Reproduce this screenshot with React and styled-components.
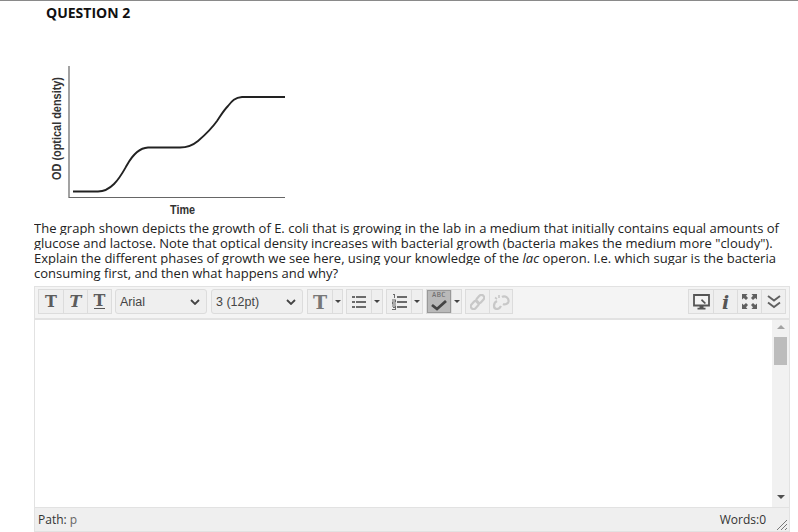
import React from "react";
import styled, { createGlobalStyle } from "styled-components";

const GlobalStyle = createGlobalStyle`
  html, body {
    margin: 0;
    padding: 0;
    background: #fff;
    overflow: hidden;
  }
  * {
    box-sizing: border-box;
  }
`;

const questionLines = [
  ["The graph shown depicts the growth of E. coli that is growing in the lab in a medium that initially contains equal amounts of"],
  ['glucose and lactose. Note that optical density increases with bacterial growth (bacteria makes the medium more "cloudy").'],
  ["Explain the different phases of growth we see here, using your knowledge of the ", <i key="lac">lac</i>, " operon. I.e. which sugar is the bacteria"],
  ["consuming first, and then what happens and why?"],
];

const GrowthChart = () => (
  <ChartSvg viewBox="0 0 260 170" width="260" height="170">
    <path d="M39 16V147.5H255" fill="none" stroke="#666" strokeWidth="1.2" />
    <path
      d="M43 141.5H68C75 141.5 80 138 84 134C90 128 93 122 97 115C102 106 108 98 118 97.5H148C156 98 162 96 168 91C175 85 182 78 187 71C191 65 194 60 198 56C202 51 205 47.5 212 47H255"
      fill="none"
      stroke="#222"
      strokeWidth="1.9"
    />
    <AxisLabel x="0" y="0" textLength="103" lengthAdjust="spacingAndGlyphs" transform="translate(30.5 130) rotate(-90)">
      OD (optical density)
    </AxisLabel>
    <AxisLabel x="140" y="164" textLength="25" lengthAdjust="spacingAndGlyphs">
      Time
    </AxisLabel>
  </ChartSvg>
);

const ListIcon = () => (
  <svg width="14" height="14" viewBox="0 0 14 14" fill="#6b6b6b">
    <path d="M0 1h3v2H0zM0 6h3v2H0zM0 11h3v2H0z" />
    <path d="M4 1h10v2H4zM4 6h10v2H4zM4 11h10v2H4z" />
  </svg>
);

const NumberedIcon = () => (
  <svg width="15" height="16" viewBox="0 0 15 16" fill="#6b6b6b">
    <path d="M1 0h2v4H2V1H1zM0 5.500h4v3H1v1h3v1H0v-3h3v-1H0zM0 11.500h4v4.500H0v-1h3v-1H1v-1h2v-.5H0z" />
    <path d="M5 2h10v2H5zM5 7h10v2H5zM5 12h10v2H5z" />
  </svg>
);

const SpellIcon = () => (
  <SpellGlyph>
    <small>ABC</small>
    <svg width="16" height="11" viewBox="0 0 16 11">
      <path d="M1 5l5 4 9-8" fill="none" stroke="#444" strokeWidth="2.8" />
    </svg>
  </SpellGlyph>
);

const LinkIcon = () => (
  <svg width="15" height="16" viewBox="0 0 15 16" fill="none" stroke="#c8c8c8" strokeWidth="2.2">
    <rect x="7.500" y="0.500" width="5.500" height="9" rx="2.700" transform="rotate(42 10.200 5)" />
    <rect x="2" y="6.500" width="5.500" height="9" rx="2.700" transform="rotate(42 4.700 11)" />
  </svg>
);

const UnlinkIcon = () => (
  <svg width="18" height="16" viewBox="0 0 18 16" fill="none" stroke="#c8c8c8" strokeWidth="2.200">
    <path d="M5 7C1 9 1 15 5 15C7 15 8 14 9 12" />
    <path d="M10 3C13 1 17 4 16.500 7.500C16 10 13 11 11 10" />
    <path d="M7 1v3M3 3.500l2 1.500" strokeWidth="1.600" />
  </svg>
);

const MonitorIcon = () => (
  <svg width="17" height="16" viewBox="0 0 17 16">
    <path d="M1 1h15v10.500H1z" fill="#f4f4f4" stroke="#555" strokeWidth="1.800" />
    <path d="M9 5l4 4-1.300 1L8 6.500z" fill="#555" />
    <path d="M6.500 12h4v1.800h2V15.500h-8v-1.700h2z" fill="#555" />
  </svg>
);

const ExpandIcon = () => (
  <svg width="15" height="15" viewBox="0 0 15 15" fill="#606060">
    <path d="M0 0h5.500L4 1.800 6 4 4 6 1.800 4 0 5.500zM15 0v5.500L13.200 4 11 6 9 4l2-2.200L9.500 0zM0 15V9.500L1.800 11 4 9l2 2-2 2.200L5.500 15zM15 15H9.500L11 13.200 9 11l2-2 2.200 2L15 9.500z" />
  </svg>
);

const CollapseIcon = () => (
  <svg width="16" height="16" viewBox="0 0 16 16" fill="none" stroke="#606060" strokeWidth="1.900">
    <path d="M2 2l6 4.500L14 2M2 8.500L8 13l6-4.500" />
  </svg>
);

const Chevron = () => (
  <svg width="10" height="6" viewBox="0 0 10 6" fill="none" stroke="#444" strokeWidth="1.800">
    <path d="M1 1l4 4 4-4" />
  </svg>
);

const App = () => (
  <>
    <GlobalStyle />
    <Page>
      <Title>QUESTION 2</Title>
      <Figure>
        <GrowthChart />
      </Figure>
      <Question>
        {questionLines.map((line, index) => (
          <QuestionLine key={index} $last={index === questionLines.length - 1}>
            {line}
          </QuestionLine>
        ))}
      </Question>
      <Editor>
        <Toolbar>
          <ToolGroup>
            <ToolButton><SerifGlyph>T</SerifGlyph></ToolButton>
            <ToolButton><SerifGlyph $italic>T</SerifGlyph></ToolButton>
            <ToolButton><SerifGlyph $underline>T</SerifGlyph></ToolButton>
          </ToolGroup>
          <SelectBox>Arial<Chevron /></SelectBox>
          <SelectBox>3 (12pt)<Chevron /></SelectBox>
          <ToolGroup>
            <ToolButton><SerifGlyph $large>T</SerifGlyph></ToolButton>
            <Caret $narrow />
          </ToolGroup>
          <ToolGroup>
            <ToolButton><ListIcon /></ToolButton>
            <Caret />
          </ToolGroup>
          <ToolGroup>
            <ToolButton><NumberedIcon /></ToolButton>
            <Caret />
          </ToolGroup>
          <ToolGroup>
            <ToolButton $active><SpellIcon /></ToolButton>
            <Caret $narrow />
          </ToolGroup>
          <ToolGroup>
            <ToolButton $compact><LinkIcon /></ToolButton>
            <ToolButton $compact><UnlinkIcon /></ToolButton>
          </ToolGroup>
          <ToolbarSpacer />
          <ToolGroup>
            <ToolButton><MonitorIcon /></ToolButton>
            <ToolButton><InfoGlyph>i</InfoGlyph></ToolButton>
            <ToolButton><ExpandIcon /></ToolButton>
            <ToolButton><CollapseIcon /></ToolButton>
          </ToolGroup>
        </Toolbar>
        <EditorBody>
          <WriteArea />
          <ScrollTrack>
            <ScrollArrow />
            <ScrollThumb />
            <ScrollArrow $down />
          </ScrollTrack>
        </EditorBody>
        <StatusBar>
          <span>Path: <PathValue>p</PathValue></span>
          <Words>Words:0</Words>
          <ResizeHandle width="11" height="11" viewBox="0 0 11 11" stroke="#777" strokeWidth="1">
            <path d="M1 11L11 1M5 11l6-6M9 11l2-2" />
          </ResizeHandle>
        </StatusBar>
      </Editor>
    </Page>
  </>
);

const Page = styled.div`
  width: 798px;
  height: 532px;
  border-top: 1px solid #8a8a8a;
  display: flex;
  flex-direction: column;
  padding-left: 34px;
  font-family: "Open Sans", sans-serif;
  color: #222;
  overflow: hidden;
`;

const Title = styled.div`
  margin-left: 12px;
  padding-top: 2px;
  height: 49px;
  font-size: 14px;
  line-height: 19px;
  font-weight: 700;
  color: #111;
`;

const Figure = styled.div`
  height: 170px;
  margin-left: -4px;
`;

const ChartSvg = styled.svg`
  display: block;
`;

const AxisLabel = styled.text`
  font-family: "Liberation Sans", Arial, sans-serif;
  font-size: 12px;
  font-weight: 700;
  fill: #333;
`;

const Question = styled.div`
  height: 66px;
  font-size: 13px;
`;

/* descenders of all but the last line are cut off in the original */
const QuestionLine = styled.div`
  height: 15px;
  line-height: 17px;
  white-space: nowrap;
  overflow: ${({ $last }) => ($last ? "visible" : "hidden")};
`;

const Editor = styled.div`
  width: 756px;
  display: flex;
  flex-direction: column;
`;

const Toolbar = styled.div`
  height: 34px;
  padding: 2px 3px 0 3px;
  background: #f4f4f4;
  border: 1px solid #e2e2e2;
  border-bottom: 2px solid #e2e2e2;
  display: flex;
  gap: 3px;
  align-items: flex-start;
`;

const ToolbarSpacer = styled.div`
  flex: 1;
`;

const ToolGroup = styled.div`
  display: flex;
  height: 25px;
  border: 1px solid #dcdcdc;
  background: #efefef;
`;

const ToolButton = styled.div`
  width: ${({ $compact }) => ($compact ? "23px" : "24px")};
  height: 23px;
  display: flex;
  align-items: center;
  justify-content: center;
  background: ${({ $active }) => ($active ? "#b9b9b9" : "transparent")};
  box-shadow: ${({ $active }) => ($active ? "inset 0 0 0 1px #999" : "none")};
  & + & {
    border-left: 1px solid #dcdcdc;
  }
`;

const SerifGlyph = styled.span`
  font-family: "DejaVu Serif", serif;
  font-weight: 700;
  font-size: ${({ $large }) => ($large ? "19px" : "16px")};
  font-style: ${({ $italic }) => ($italic ? "italic" : "normal")};
  color: ${({ $large }) => ($large ? "#777" : "#5c5c5c")};
  line-height: ${({ $underline }) => ($underline ? "14px" : "16px")};
  border-bottom: ${({ $underline }) => ($underline ? "1px solid #555" : "none")};
`;

const InfoGlyph = styled.span`
  font-family: "DejaVu Serif", serif;
  font-weight: 700;
  font-style: italic;
  font-size: 19px;
  line-height: 20px;
  color: #555;
`;

const SpellGlyph = styled.div`
  display: flex;
  flex-direction: column;
  align-items: center;
  gap: 2px;
  color: #666;
  line-height: 6px;
  small {
    font-family: "DejaVu Sans Mono", monospace;
    font-size: 7px;
    letter-spacing: 0.5px;
  }
`;

const Caret = styled.div`
  width: ${({ $narrow }) => ($narrow ? "10px" : "11px")};
  border-left: 1px solid #dcdcdc;
  display: flex;
  align-items: center;
  justify-content: center;
  &::after {
    content: "";
    border: 3px solid transparent;
    border-top: 3px solid #444;
    border-bottom: 0;
  }
`;

const SelectBox = styled.div`
  width: 92px;
  height: 25px;
  margin-right: 1px;
  padding: 0 6px 0 4px;
  background: #efefef;
  border: 1px solid #dcdcdc;
  border-radius: 3px;
  display: flex;
  align-items: center;
  justify-content: space-between;
  font-family: "Liberation Sans", Arial, sans-serif;
  font-size: 12.5px;
  color: #444;
`;

const EditorBody = styled.div`
  height: 187px;
  display: flex;
  border-left: 1px solid #e2e2e2;
  border-right: 1px solid #e2e2e2;
`;

const WriteArea = styled.div`
  flex: 1;
  background: #fff;
`;

const ScrollTrack = styled.div`
  width: 17px;
  background: #f1f1f1;
  display: flex;
  flex-direction: column;
  align-items: center;
  justify-content: flex-start;
  padding-top: 5px;
`;

const ScrollArrow = styled.div`
  border-left: 4px solid transparent;
  border-right: 4px solid transparent;
  border-bottom: ${({ $down }) => ($down ? "0" : "4px solid #a3a3a3")};
  border-top: ${({ $down }) => ($down ? "4px solid #505050" : "0")};
  margin-top: ${({ $down }) => ($down ? "auto" : "0")};
  margin-bottom: ${({ $down }) => ($down ? "8px" : "0")};
`;

const ScrollThumb = styled.div`
  width: 13px;
  height: 28px;
  margin-top: 8px;
  background: #bcbcbc;
`;

const StatusBar = styled.div`
  position: relative;
  height: 25px;
  padding: 0 23px 0 3px;
  background: #efefef;
  border: 1px solid #e2e2e2;
  display: flex;
  align-items: center;
  justify-content: space-between;
  font-size: 12px;
  color: #333;
`;

const PathValue = styled.span`
  color: #666;
`;

const Words = styled.span`
  color: #333;
`;

const ResizeHandle = styled.svg`
  position: absolute;
  right: 2px;
  bottom: 1px;
`;

export default App;
